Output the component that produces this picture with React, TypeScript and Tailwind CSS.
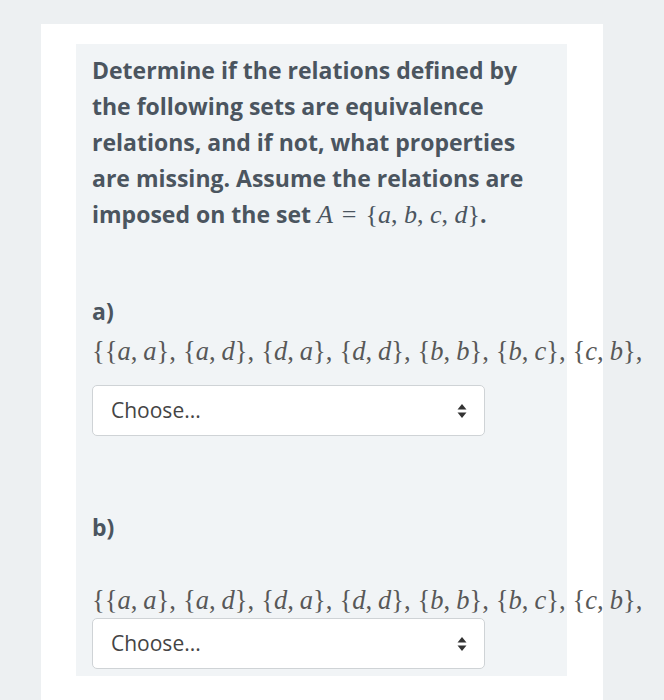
import React from 'react';

const pairs = [
  ['a', 'a'],
  ['a', 'd'],
  ['d', 'a'],
  ['d', 'd'],
  ['b', 'b'],
  ['b', 'c'],
  ['c', 'b'],
];

const serif = "font-['Liberation_Serif',serif]";

function SetLine() {
  return (
    <div className={`${serif} whitespace-nowrap text-[26.5px] leading-[36px] text-[#585858]`}>
      <span>{'{'}</span>
      {pairs.map(([x, y], i) => (
        <span key={i}>
          <span>{'{'}</span>
          <i>{x}</i>
          <span className="mr-[6px]">,</span>
          <i>{y}</i>
          <span>{'}'}</span>
          <span className="mr-[7px]">,</span>
        </span>
      ))}
    </div>
  );
}

function UpDown() {
  return (
    <svg width="10" height="16" viewBox="0 0 10 16" className="text-[#333]">
      <path d="M5 1 L9.5 6.5 H0.5 Z" fill="currentColor" />
      <path d="M5 15 L9.5 9.5 H0.5 Z" fill="currentColor" />
    </svg>
  );
}

function Choose() {
  return (
    <div className="flex h-[51px] w-[393px] items-center justify-between rounded-[5px] border border-[#cfd3d6] bg-white pl-[18px] pr-[17px]">
      <span className="text-[21px] text-[#444]">Choose...</span>
      <UpDown />
    </div>
  );
}

export default function App() {
  return (
    <div className="h-[700px] w-[664px] overflow-hidden bg-[#edf0f2] pt-[24px] pl-[41px] font-['Open_Sans',sans-serif]">
      <div className="h-[700px] w-[562px] bg-white pt-[20px] pl-[35px]">
        <div className="w-[491px] bg-[#f1f4f6] pt-[8px] pb-[7px] pl-[16px]">
          <div className="w-[460px] text-[23px] font-bold leading-[36px] text-[#4b555f]">
            Determine if the relations defined by the following sets are equivalence relations, and if not,
            what properties are missing. Assume the relations are imposed on the set{' '}
            <span className={`${serif} text-[26px] font-normal text-[#4b555f]`}>
              <i>A</i>
              <span className="mx-[9px]">=</span>
              <span>{'{'}</span>
              <i>a</i>, <i>b</i>, <i>c</i>, <i>d</i>
              <span>{'}'}</span>
            </span>
            .
          </div>

          <div className="mt-[63px] text-[23px] font-bold leading-[30px] text-[#4b555f]">a)</div>
          <div className="mt-[7px]">
            <SetLine />
          </div>
          <div className="mt-[16px]">
            <Choose />
          </div>

          <div className="mt-[76px] text-[23px] font-bold leading-[30px] text-[#4b555f]">b)</div>
          <div className="mt-[40px]">
            <SetLine />
          </div>
          <div>
            <Choose />
          </div>
        </div>
      </div>
    </div>
  );
}
